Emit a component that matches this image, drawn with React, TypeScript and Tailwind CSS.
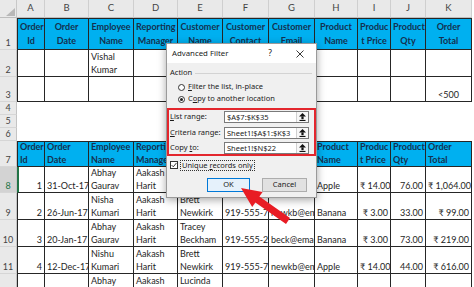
import React from "react";

type C = { t?: string[]; a?: "l" | "r" | "c" };

const letters = ["A", "B", "C", "D", "E", "F", "G", "H", "I", "J", "K"];

const heads: string[][] = [
  ["Order", "Id"],
  ["Order", "Date"],
  ["Employee", "Name"],
  ["Reporting", "Manager"],
  ["Customer", "Name"],
  ["Customer", "Contact"],
  ["Customer", "Email"],
  ["Product", "Name"],
  ["Produc", "t Price"],
  ["Product", "Qty"],
  ["Order", "Total"],
];

const L = (...t: string[]): C => ({ t, a: "l" });
const R = (...t: string[]): C => ({ t, a: "r" });
const E: C = {};

const dataRows: C[][] = [
  [R("1"), R("31-Oct-17"), L("Abhay", "Gaurav"), L("Aakash", "Harit"), L("Tracey", "Beckham"), L("919-555-2314"), L("beck@email.com"), L("Apple"), R("₹ 14.00"), R("76.00"), R("₹ 1,064.00")],
  [R("2"), R("26-Jun-17"), L("Nisha", "Kumari"), L("Aakash", "Harit"), L("Brett", "Newkirk"), L("919-555-7655"), L("newkb@email.com"), L("Banana"), R("₹ 3.00"), R("33.00"), R("₹ 99.00")],
  [R("3"), R("20-Jan-17"), L("Abhay", "Gaurav"), L("Aakash", "Harit"), L("Tracey", "Beckham"), L("919-555-2314"), L("beck@email.com"), L("Banana"), R("₹ 3.00"), R("73.00"), R("₹ 219.00")],
  [R("4"), R("12-Dec-17"), L("Nishu", "Kumari"), L("Aakash", "Harit"), L("Brett", "Newkirk"), L("919-555-7655"), L("newkb@email.com"), L("Apple"), R("₹ 14.00"), R("44.00"), R("₹ 616.00")],
  [R("5"), R("05-Jan-17"), L("Abhay", "Gaurav"), L("Aakash", "Harit"), L("Lucinda", "Meyer"), E, E, L("Apple"), R("₹ 14.00"), R("12.00"), R("₹ 168.00")],
];

function RowNum({ n, sel }: { n: string; sel?: boolean }) {
  return (
    <div
      className={
        "flex items-end justify-center border-r border-b border-r-[#c4c4c4] border-b-[#d6d6d6] leading-[13px] text-[9px] " +
        (sel ? "bg-[#d3d3d3] text-[#217346]" : "bg-[#e9e9e9] text-[#444]")
      }
    >
      {n}
    </div>
  );
}

function DataCell({ c, first, top, sel }: { c: C; first?: boolean; top?: boolean; sel?: boolean }) {
  const al = c.a === "r" ? "text-right" : c.a === "c" ? "text-center" : "text-left";
  return (
    <div
      className={
        "flex flex-col justify-end overflow-hidden whitespace-nowrap border-r border-b border-[#262626] px-[2px] leading-[13px] text-[9px] text-[#1e1e1e] " +
        al +
        (first ? (sel ? " border-l-2 border-l-[#217346]" : " border-l") : "") +
        (top ? " border-t" : "")
      }
    >
      {(c.t || []).map((s, i) => (
        <div key={i}>{s}</div>
      ))}
    </div>
  );
}

function BlueCell({ lines, first, center }: { lines: string[]; first?: boolean; center?: boolean }) {
  return (
    <div
      className={
        "flex flex-col overflow-hidden whitespace-nowrap border-r border-b border-t border-[#262626] bg-[#00b0f0] px-[2px] font-bold text-[9px] text-[#14304f] " +
        (center ? "justify-center text-center leading-[14px]" : "justify-end text-left leading-[13px]") +
        (first ? " border-l" : "")
      }
    >
      {lines.map((s, i) => (
        <div key={i}>{s}</div>
      ))}
    </div>
  );
}

function Blank() {
  return <div className="bg-white" />;
}

function UpIcon() {
  return (
    <svg width="7" height="8" viewBox="0 0 7 8">
      <polygon points="3.5,0 7,3.6 0,3.6" fill="#111" />
      <rect x="2.4" y="3.4" width="2.2" height="2.8" fill="#111" />
      <rect x="0.5" y="6.9" width="6" height="1.1" fill="#111" />
    </svg>
  );
}

function RangeRow({ label, ul, value }: { label: [string, string, string]; ul?: boolean; value: string }) {
  return (
    <div className="flex h-[12px] items-center pl-[1px]">
      <div className="w-[54px] whitespace-nowrap">
        {label[0]}
        <span className="underline">{label[1]}</span>
        {label[2]}
      </div>
      <div className="flex h-[12px] w-[85px] items-center border border-[#7a7a7a] bg-white">
        <div className="flex-1 overflow-hidden whitespace-nowrap pl-[2px] leading-[10px]">{value}</div>
        <div className="flex h-full w-[12px] items-center justify-center border-l border-[#d0d0d0] bg-[#f7f7f7]">
          <UpIcon />
        </div>
      </div>
    </div>
  );
}

function Radio({ on }: { on?: boolean }) {
  return (
    <div className="flex h-[7px] w-[7px] items-center justify-center rounded-full border border-[#333] bg-white">
      {on && <div className="h-[3px] w-[3px] rounded-full bg-[#222]" />}
    </div>
  );
}

export default function App() {
  const rowsLabel = ["1", "2", "3", "4", "5", "6", "7", "8", "9", "10", "11", "12"];
  return (
    <div className="relative h-[287px] w-[474px] overflow-hidden bg-white font-['Lato','Noto_Sans',sans-serif]">
      <div className="grid grid-cols-[17px_28px_44px_45px_44px_45px_46px_46px_43px_33px_35px_46px] grid-rows-[18px_32px_27px_25px_13px_13px_13px_26px_26px_27px_27px_27px_27px]">
        {/* column letters */}
        <div className="relative border-r border-b border-r-[#c8c8c8] border-b-[#bdbdbd] bg-[#e9e9e9]">
          <svg className="absolute left-[6px] top-[8px]" width="9" height="8" viewBox="0 0 9 8">
            <polygon points="9,0 9,8 0,8" fill="#b8b8b8" />
          </svg>
        </div>
        {letters.map((l) => (
          <div
            key={l}
            className="flex items-center justify-center border-r border-b border-r-[#cfcfcf] border-b-[#bdbdbd] bg-[#e9e9e9] text-[9.5px] text-[#444]"
          >
            {l}
          </div>
        ))}

        {/* row 1 */}
        <RowNum n="1" />
        {heads.map((h, i) => (
          <BlueCell key={i} lines={h} first={i === 0} center />
        ))}

        {/* row 2 */}
        <RowNum n="2" />
        {letters.map((_, i) => (
          <DataCell key={i} c={i === 2 ? L("Vishal", "Kumar") : E} first={i === 0} />
        ))}

        {/* row 3 */}
        <RowNum n="3" />
        {letters.map((_, i) => (
          <DataCell key={i} c={i === 10 ? { t: ["<500"], a: "c" } : E} first={i === 0} />
        ))}

        {/* rows 4-6 */}
        {["4", "5", "6"].map((n) => (
          <React.Fragment key={n}>
            <RowNum n={n} />
            {letters.map((_, i) => (
              <Blank key={i} />
            ))}
          </React.Fragment>
        ))}

        {/* row 7 */}
        <RowNum n="7" />
        {heads.map((h, i) => (
          <BlueCell key={i} lines={h} first={i === 0} />
        ))}

        {/* rows 8-12 */}
        {dataRows.map((r, ri) => (
          <React.Fragment key={ri}>
            <RowNum n={rowsLabel[7 + ri]} sel={ri === 0} />
            {r.map((c, i) => (
              <DataCell key={i} c={c} first={i === 0} sel={ri === 0 && i === 0} />
            ))}
          </React.Fragment>
        ))}
      </div>

      {/* Advanced Filter dialog */}
      <div className="absolute left-[166px] top-[43px] flex h-[155px] w-[151px] flex-col border border-[#9a9a9a] bg-[#f0f0f0] font-['Noto_Sans',sans-serif] text-[7.5px] text-[#1a1a1a] shadow-[0_2px_8px_rgba(0,0,0,0.35)]">
        <div className="flex h-[19px] items-center bg-white pl-[5px]">
          <div className="text-[7.8px]">Advanced Filter</div>
          <div className="ml-auto flex items-center pr-[1px]">
            <div className="w-[30px] text-center text-[8.5px]">?</div>
            <div className="flex w-[30px] justify-center">
              <svg width="8" height="8" viewBox="0 0 8 8">
                <path d="M0.5 0.5 L7.5 7.5 M7.5 0.5 L0.5 7.5" stroke="#222" strokeWidth="0.9" />
              </svg>
            </div>
          </div>
        </div>

        <div className="mt-[5px] flex h-[10px] items-center pl-[3px] pr-[4px]">
          <span>Action</span>
          <div className="ml-[3px] h-px flex-1 bg-[#d3d3d3]" />
        </div>

        <div className="mt-[3px] flex h-[12px] items-center gap-[3px] pl-[11px]">
          <Radio />
          <span>
            <span className="underline">F</span>ilter the list, in-place
          </span>
        </div>
        <div className="flex h-[12px] items-center gap-[3px] pl-[11px]">
          <Radio on />
          <span>
            C<span className="underline">o</span>py to another location
          </span>
        </div>

        <div className="mt-[3px] flex h-[48px] flex-col gap-[3.5px] border-2 border-[#e3262d] pt-[1px]">
          <RangeRow label={["", "L", "ist range:"]} value="$A$7:$K$35" />
          <RangeRow label={["", "C", "riteria range:"]} value="Sheet1!$A$1:$K$3" />
          <RangeRow label={["Copy ", "t", "o:"]} value="Sheet1!$N$22" />
        </div>

        <div className="mt-[3px] flex h-[12px] items-center pl-[3px]">
          <div className="flex h-[8px] w-[8px] items-center justify-center border border-[#333] bg-white">
            <svg width="6" height="6" viewBox="0 0 6 6">
              <path d="M0.6 3.1 L2.3 4.8 L5.5 0.9" stroke="#222" strokeWidth="0.9" fill="none" />
            </svg>
          </div>
          <div className="ml-[2px] border border-dotted border-[#333] px-[1px] leading-[9px]">
            Unique <span className="underline">r</span>ecords only
          </div>
        </div>

        <div className="mt-[7px] flex h-[14px] pl-[40px]">
          <div className="flex w-[43px] items-center justify-center border border-[#0078d7] bg-[#e5f1fb]">OK</div>
          <div className="ml-[12px] flex w-[45px] items-center justify-center border border-[#adadad] bg-[#e1e1e1]">
            Cancel
          </div>
        </div>
      </div>

      {/* red arrow */}
      <svg className="pointer-events-none absolute left-0 top-0" width="474" height="287" viewBox="0 0 474 287">
        <polygon
          points="241,188 262.6,192.1 259.4,196.6 290,218.1 286,223.9 255.4,202.4 252.2,206.9"
          fill="#e81c24"
        />
      </svg>
    </div>
  );
}
